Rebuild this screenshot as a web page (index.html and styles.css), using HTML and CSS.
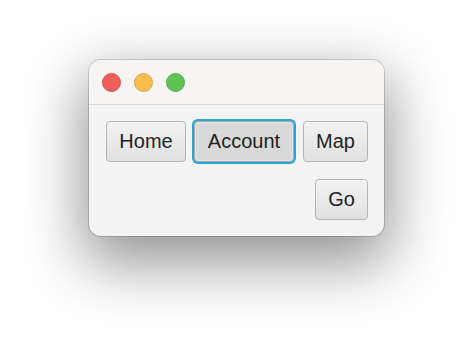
FILE: index.html
```html
<!DOCTYPE html>
<html>
<head>
<meta charset="utf-8">
<link rel="stylesheet" href="styles.css">
</head>
<body>
<div class="window">
  <div class="titlebar">
    <span class="light red"></span>
    <span class="light yellow"></span>
    <span class="light green"></span>
  </div>
  <div class="content">
    <div class="row">
      <button class="btn home">Home</button>
      <button class="btn account focused">Account</button>
      <button class="btn map">Map</button>
    </div>
    <div class="row end">
      <button class="btn go">Go</button>
    </div>
  </div>
</div>
</body>
</html>
```
FILE: styles.css
```css
html, body {
  margin: 0;
  padding: 0;
  background: #ffffff;
}
body {
  width: 474px;
  height: 354px;
  padding: 60px 0 0 89px;
  box-sizing: border-box;
  font-family: "Liberation Sans", Arial, sans-serif;
}
.window {
  width: 295px;
  height: 176px;
  box-sizing: border-box;
  border-radius: 12px;
  background: #f4f4f4;
  box-shadow: 0 0 0 1px rgba(0,0,0,0.16), 0 22px 60px 6px rgba(0,0,0,0.42);
  overflow: hidden;
  display: flex;
  flex-direction: column;
}
.titlebar {
  height: 45px;
  box-sizing: border-box;
  background: #f6f5f4;
  border-bottom: 1px solid #dadada;
  display: flex;
  align-items: center;
  gap: 13px;
  padding: 1px 0 0 13px;
}
.light {
  width: 19px;
  height: 19px;
  border-radius: 50%;
  box-sizing: border-box;
}
.red { background: #ee5f58; border: 1px solid #dc4c44; }
.yellow { background: #f7bd4f; border: 1px solid #e1a63a; }
.green { background: #5fc454; border: 1px solid #4cae42; }
.content {
  flex: 1;
  padding: 16px 16px 0 17px;
  display: flex;
  flex-direction: column;
  gap: 17px;
}
.row {
  display: flex;
  gap: 8px;
}
.row.end {
  justify-content: flex-end;
}
.btn {
  height: 41px;
  box-sizing: border-box;
  border: 1px solid #b4b4b4;
  border-radius: 4px;
  background: linear-gradient(#f3f3f3, #e0e0e0);
  box-shadow: inset 0 1px 0 #fbfbfb;
  font-family: "Liberation Sans", Arial, sans-serif;
  font-size: 20px;
  color: #222222;
  padding: 0;
  margin: 0;
}
.home { width: 80px; }
.account { width: 100px; }
.map { width: 65px; margin-left: 1px; }
.go { width: 53px; }
.focused {
  background: #d9d9d9;
  border-color: #a9a9a9;
  box-shadow: 0 0 0 2px #29a3d8, inset 0 0 0 1px #e6e6e6;
}
```
